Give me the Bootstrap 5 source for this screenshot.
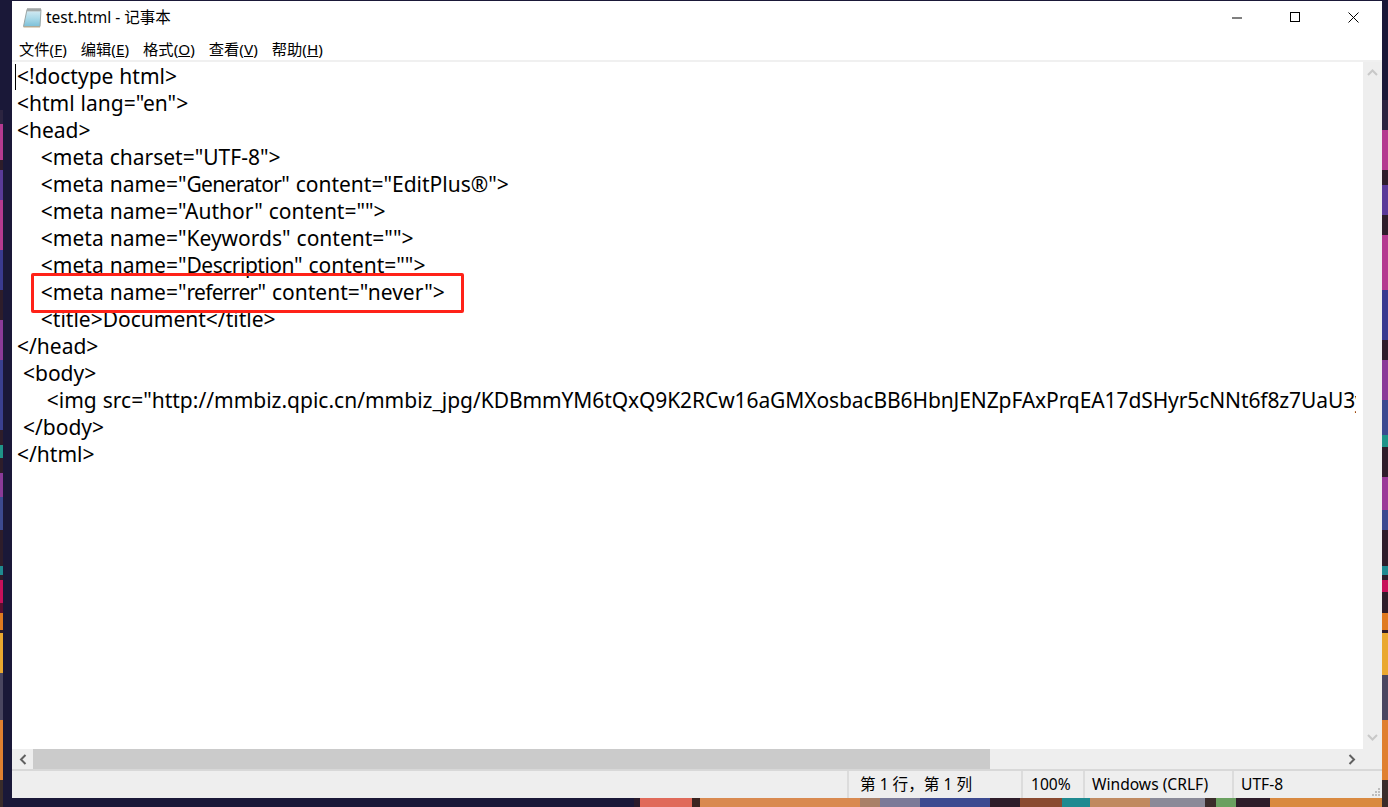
<!doctype html>
<html lang="zh">
<head>
<meta charset="utf-8">
<title>test.html - 记事本</title>
<link href="https://cdn.jsdelivr.net/npm/bootstrap@5.3.0/dist/css/bootstrap.min.css" rel="stylesheet">
<style>
html,body{height:100%;margin:0;overflow:hidden}
body{font-family:"Noto Sans","Noto Sans CJK SC",sans-serif;color:#000;
background-color:#1a1838;
background-image:
 linear-gradient(to bottom,#1a1838 0 110px,#2c2440 110px 124px,#b43a90 124px 160px,#2e1d2a 160px 170px,#5a3a98 170px 200px,#b43a90 200px 250px,#3a3a90 250px 290px,#2e1d2a 290px 320px,#8a3a98 320px 360px,#3a4090 360px 430px,#2e1d2a 430px 445px,#1f9488 445px 458px,#2e1d2a 458px 473px,#8a3a98 473px 497px,#3c4a90 497px 530px,#2e1d2a 530px 566px,#1f8a90 566px 575px,#2e1d2a 575px 580px,#c8105a 580px 603px,#5a1030 603px 613px,#e07a20 613px 630px,#2e1d2a 630px 633px,#eaa830 633px 673px,#4a4660 673px 720px,#e08030 720px 780px,#3a2c2a 780px),
 linear-gradient(to bottom,#1a1838 0 100px,#2c2440 100px 130px,#b43a90 130px 170px,#2e1d2a 170px 185px,#5a3a98 185px 215px,#2e1d2a 215px 235px,#b43a90 235px 290px,#3a3a90 290px 340px,#2e1d2a 340px 360px,#8a3a98 360px 400px,#3c4a90 400px 435px,#1f9488 435px 447px,#2e1d2a 447px 477px,#9a3a98 477px 510px,#3c4a90 510px 530px,#2e1d2a 530px 566px,#1f8a90 566px 575px,#2e1d2a 575px 580px,#c8105a 580px 592px,#2e1d2a 592px 613px,#e07a20 613px 630px,#2e1d2a 630px 633px,#eaa830 633px 675px,#4a4660 675px 720px,#e08030 720px 780px,#3a2c2a 780px),
 linear-gradient(to right,#1a1838 0 634px,#2a1a2a 634px 640px,#e06a5a 640px 692px,#3a2420 692px 700px,#d98a50 700px 860px,#a88068 860px 880px,#7a7a98 880px 920px,#3c4a90 920px 990px,#2e1d2a 990px 1020px,#8a4a30 1020px 1062px,#1f8a90 1062px 1090px,#c08a60 1090px 1150px,#8a8a98 1150px 1205px,#3a2c2a 1205px 1216px,#6aa060 1216px 1236px,#2e1d2a 1236px 1270px,#d98a40 1270px 1388px);
background-size:3px 100%,6px 100%,100% 9px;
background-position:0 0,100% 0,0 100%;
background-repeat:no-repeat}
.desk{width:1388px;height:807px;padding:1px 6px 9px 12px}
.win{height:797px;background:#fff}
.titlebar{height:31px;padding:2px 0 0 10px;gap:4px;font-size:15.5px}
.capbtns{margin-left:auto}
.capbtn{width:58px;height:29px}
.menubar{height:30px;padding:6px 0 0 7px;gap:14px;font-size:15.3px;border-bottom:2px solid #f0f0f0}
.menubar u{text-underline-offset:1px}
.mid{min-height:0}
.editor{min-width:0;position:relative;padding:1px 7px 0 5px;font-family:"Noto Sans","Open Sans",sans-serif;font-size:21px;word-spacing:.5px;line-height:27px;white-space:pre}
.clip{overflow:hidden;height:100%}
.tight{letter-spacing:-.7px}
.tighter{letter-spacing:-.5px}
.urlfit{letter-spacing:-.1px}
.caret{position:absolute;left:3px;top:2px;width:1px;height:26px;background:#000}
.redbox{position:absolute;left:19px;top:211px;width:433px;height:40px;border:3px solid #ff2218;border-radius:2px}
.vbar{width:20px;background:#eee;padding:7px 0 8px}
.hbar{height:20px;background:#eee}
.sbthumb{width:957px;background:#cbcbcb}
.sbarrow{width:21px}
.sbcorner{width:20px}
.status{height:29px;background:#eee;border-top:2px solid #d8d8d8;font-size:15.6px;position:relative}
.cell{height:100%;padding-left:11px;border-left:2px solid #dcdcdc}
.w1{width:174px;padding-left:11px}.w2{width:62px;padding-left:8px}.w3{width:149px;padding-left:7px}.w4{width:150px;padding-left:7px}
.grip{position:absolute;right:1px;bottom:1px}
</style>
</head>
<body>
<div class="desk">
<div class="win d-flex flex-column">
  <div class="titlebar d-flex align-items-center">
    <svg width="20" height="21" viewBox="0 0 20 21"><defs><linearGradient id="np" x1="0" y1="0" x2="0" y2="1"><stop offset="0" stop-color="#d8ecf4"/><stop offset=".55" stop-color="#a8d8e8"/><stop offset="1" stop-color="#7cc0d8"/></linearGradient></defs><path d="M5 2.500H19L18 19.500H1.500Z" fill="url(#np)" stroke="#9aa6a6"/><path d="M5 1.500H19V4.500H4.500Z" fill="#b8bcbc"/><path d="M6 1v3M8 1v3M10 1v3M12 1v3M14 1v3M16 1v3M18 1v3" stroke="#7e8686" stroke-width=".8"/><path d="M1.500 20H18" stroke="#c2ae8c"/></svg>
    <span>test.html - 记事本</span>
    <div class="capbtns d-flex">
      <div class="capbtn d-flex align-items-center justify-content-center"><svg width="11" height="11" viewBox="0 0 11 11"><path d="M0 6h10" stroke="#000"/></svg></div>
      <div class="capbtn d-flex align-items-center justify-content-center"><svg width="11" height="11" viewBox="0 0 11 11"><rect x=".5" y=".5" width="9" height="9" fill="none" stroke="#000"/></svg></div>
      <div class="capbtn d-flex align-items-center justify-content-center"><svg width="11" height="11" viewBox="0 0 11 11"><path d="M.5.5l10 10M10.500.5l-10 10" stroke="#000"/></svg></div>
    </div>
  </div>
  <div class="menubar d-flex align-items-center">
    <span>文件(<u>F</u>)</span><span>编辑(<u>E</u>)</span><span>格式(<u>O</u>)</span><span>查看(<u>V</u>)</span><span>帮助(<u>H</u>)</span>
  </div>
  <div class="mid flex-grow-1 d-flex">
    <div class="editor flex-grow-1"><div class="clip"><div>&lt;!doctype html&gt;</div><div>&lt;html lang="en"&gt;</div><div>&lt;head&gt;</div><div>    &lt;meta charset="UTF-8"&gt;</div><div>    &lt;meta name="<span class="tight">Generator</span>" content="EditPlus®"&gt;</div><div>    &lt;meta name="Author" content=""&gt;</div><div>    &lt;meta name="Keywords" content=""&gt;</div><div>    &lt;meta name="<span class="tighter">Description</span>" content=""&gt;</div><div>    &lt;meta name="<span class="tight">referrer</span>" content="never"&gt;</div><div>    &lt;title&gt;Document&lt;/title&gt;</div><div>&lt;/head&gt;</div><div> &lt;body&gt;</div><div>     &lt;img src="http://mmbiz.qpic.cn/mmbiz_jpg/<span class="urlfit">KDBmmYM6tQxQ9K2RCw16aGMXosbacBB6HbnJENZpFAxPrqEA17dSHyr5cNNt6f8z7UaU3yKmQ</span></div><div> &lt;/body&gt;</div><div>&lt;/html&gt;</div></div><div class="caret"></div><div class="redbox"></div></div>
    <div class="vbar d-flex flex-column justify-content-between align-items-center">
      <svg width="11" height="7" viewBox="0 0 11 7"><path d="M1 6l4.500-4.500L10 6" fill="none" stroke="#c8c8c8" stroke-width="2"/></svg>
      <svg width="11" height="7" viewBox="0 0 11 7"><path d="M1 1l4.500 4.500L10 1" fill="none" stroke="#c8c8c8" stroke-width="2"/></svg>
    </div>
  </div>
  <div class="hbar d-flex">
    <div class="sbarrow d-flex align-items-center justify-content-center"><svg width="8" height="11" viewBox="0 0 8 11"><path d="M6.500 1L2 5.500 6.500 10" fill="none" stroke="#606060" stroke-width="2"/></svg></div>
    <div class="sbthumb"></div>
    <div class="flex-grow-1"></div>
    <div class="sbarrow d-flex align-items-center justify-content-center"><svg width="8" height="11" viewBox="0 0 8 11"><path d="M1.500 1L6 5.500 1.500 10" fill="none" stroke="#606060" stroke-width="2"/></svg></div>
    <div class="sbcorner"></div>
  </div>
  <div class="status d-flex align-items-center">
    <div class="flex-grow-1"></div>
    <div class="cell w1 d-flex align-items-center">第 1 行，第 1 列</div>
    <div class="cell w2 d-flex align-items-center">100%</div>
    <div class="cell w3 d-flex align-items-center">Windows (CRLF)</div>
    <div class="cell w4 d-flex align-items-center">UTF-8</div>
    <svg class="grip" width="10" height="10" viewBox="0 0 10 10"><path d="M7 1h2v2H7zM4 4h2v2H4zM7 4h2v2H7zM1 7h2v2H1zM4 7h2v2H4zM7 7h2v2H7z" fill="#bdbdbd"/></svg>
  </div>
</div>
</div>
<script src="https://cdn.jsdelivr.net/npm/bootstrap@5.3.0/dist/js/bootstrap.bundle.min.js"></script>
</body>
</html>
